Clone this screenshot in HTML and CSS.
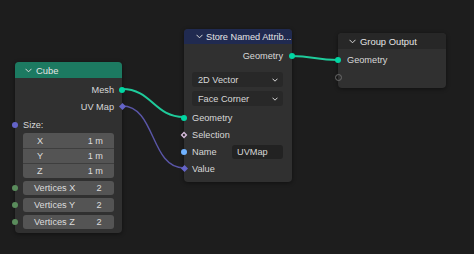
FILE: index.html
```html
<!DOCTYPE html>
<html lang="en">
<head>
    <meta charset="UTF-8">
    <title>Node Editor</title>
    <link rel="stylesheet" href="styles.css">
</head>
<body>
    <div class="editor">
        <svg class="links" width="474" height="254" viewBox="0 0 474 254">
            <path d="M122 89 C152 89 154 117 184 117" class="link link-geo"/>
            <path d="M122 106 C156 106 150 168 184 168" class="link link-vec"/>
            <path d="M291 56 C314 56 315 60 338 60" class="link link-geo"/>
        </svg>

        <!-- Cube -->
        <div class="node node-cube">
            <div class="node-header header-mesh">
                <svg class="chevron" width="7" height="5" viewBox="0 0 7 5"><polyline points="0.5,0.8 3.5,3.8 6.5,0.8"/></svg>
                <span>Cube</span>
            </div>
            <div class="node-body">
                <div class="row row-out"><span>Mesh</span><i class="socket socket-out geo"></i></div>
                <div class="row row-out"><span>UV Map</span><i class="socket socket-out diamond vec"></i></div>
                <div class="row row-in row-size"><i class="socket socket-in vec"></i><span>Size:</span></div>
                <div class="field-group">
                    <div class="field"><span class="field-label">X</span><span>1 m</span></div>
                    <div class="field"><span class="field-label">Y</span><span>1 m</span></div>
                    <div class="field"><span class="field-label">Z</span><span>1 m</span></div>
                </div>
                <div class="field field-single"><i class="socket socket-in int"></i><span>Vertices X</span><span class="num">2</span></div>
                <div class="field field-single"><i class="socket socket-in int"></i><span>Vertices Y</span><span class="num">2</span></div>
                <div class="field field-single"><i class="socket socket-in int"></i><span>Vertices Z</span><span class="num">2</span></div>
            </div>
        </div>

        <!-- Store Named Attribute -->
        <div class="node node-store">
            <div class="node-header header-attr">
                <svg class="chevron" width="7" height="5" viewBox="0 0 7 5"><polyline points="0.5,0.8 3.5,3.8 6.5,0.8"/></svg>
                <span>Store Named Attrib...</span>
            </div>
            <div class="node-body">
                <div class="row row-out"><span>Geometry</span><i class="socket socket-out geo"></i></div>
                <div class="dropdown dropdown-first"><span>2D Vector</span>
                    <svg class="chevron small" width="6" height="4" viewBox="0 0 6 4"><polyline points="0.5,0.7 3,3.2 5.5,0.7"/></svg>
                </div>
                <div class="dropdown"><span>Face Corner</span>
                    <svg class="chevron small" width="6" height="4" viewBox="0 0 6 4"><polyline points="0.5,0.7 3,3.2 5.5,0.7"/></svg>
                </div>
                <div class="row row-in row-first"><i class="socket socket-in geo"></i><span>Geometry</span></div>
                <div class="row row-in">
                    <svg class="socket-svg" width="8" height="8" viewBox="0 0 8 8"><path d="M4 0.6 L7.4 4 L4 7.4 L0.6 4 Z M4 2.6 L5.4 4 L4 5.4 L2.6 4 Z" fill="#d3b8d8" fill-rule="evenodd"/></svg>
                    <span>Selection</span>
                </div>
                <div class="row row-in"><i class="socket socket-in str"></i><span>Name</span><span class="text-field">UVMap</span></div>
                <div class="row row-in"><i class="socket socket-in diamond vec"></i><span>Value</span></div>
            </div>
        </div>

        <!-- Group Output -->
        <div class="node node-output">
            <div class="node-header header-group">
                <svg class="chevron" width="7" height="5" viewBox="0 0 7 5"><polyline points="0.5,0.8 3.5,3.8 6.5,0.8"/></svg>
                <span>Group Output</span>
            </div>
            <div class="node-body">
                <div class="row row-in"><i class="socket socket-in geo"></i><span>Geometry</span></div>
                <div class="row row-in"><i class="socket socket-in empty"></i></div>
            </div>
        </div>
    </div>
</body>
</html>
```

FILE: styles.css
```css
body {
    margin: 0;
    background: #1d1d1d;
    font-family: 'Liberation Sans', Arial, sans-serif;
    font-size: 9.2px;
    color: #d8d8d8;
}

.editor {
    position: relative;
    width: 474px;
    height: 254px;
    overflow: hidden;
    background: #1d1d1d;
}

.links {
    position: absolute;
    left: 0;
    top: 0;
}

.link {
    fill: none;
}

.link-geo {
    stroke: #1fcb9b;
    stroke-width: 2;
}

.link-vec {
    stroke: #5a56a8;
    stroke-width: 1.4;
}

/* nodes sit on a free canvas */
.node {
    position: absolute;
    background: #303030;
    border-radius: 4px;
    box-shadow: 0 1px 4px rgba(0, 0, 0, 0.45);
}

.node-cube {
    left: 15px;
    top: 62px;
    width: 107px;
}

.node-store {
    left: 184px;
    top: 29px;
    width: 108px;
}

.node-output {
    left: 338px;
    top: 33px;
    width: 108px;
}

.node-header {
    display: flex;
    align-items: center;
    height: 16px;
    padding-left: 10px;
    gap: 4px;
    border-radius: 4px 4px 0 0;
    color: #e4e4e4;
    font-size: 9.4px;
    white-space: nowrap;
    overflow: hidden;
}

.header-mesh {
    background: #1c7a61;
}

.header-attr {
    background: #202a50;
    height: 15px;
    padding-left: 12px;
    gap: 3px;
    font-size: 9.2px;
}

.header-group {
    background: #272727;
    padding-left: 11px;
}

.chevron polyline {
    fill: none;
    stroke: #d8d8d8;
    stroke-width: 1;
}

.node-body {
    display: flex;
    flex-direction: column;
    padding: 3px 0 4px;
}

.node-store .node-body {
    padding-bottom: 5px;
}

.node-output .node-body {
    padding: 2px 0 3px;
}

.row {
    position: relative;
    display: flex;
    align-items: center;
    height: 17px;
}

.row-out {
    justify-content: flex-end;
    padding-right: 8px;
}

.node-store .row-out {
    padding-right: 9px;
}

.row-in {
    padding-left: 8px;
}

.node-output .row-in {
    padding-left: 9px;
}

.row-size {
    margin-top: 2px;
    height: 16px;
}

.row-first {
    margin-top: 3px;
}

.socket {
    position: absolute;
    top: 50%;
    width: 6px;
    height: 6px;
    margin-top: -3px;
    border-radius: 50%;
}

.socket-out {
    right: -3px;
}

.socket-in {
    left: -3px;
}

.socket.diamond {
    width: 5px;
    height: 5px;
    margin-top: -2.5px;
    border-radius: 0;
    transform: rotate(45deg);
}

.socket-out.diamond {
    right: -2.5px;
}

.socket-in.diamond {
    left: -2.5px;
}

.socket-svg {
    position: absolute;
    left: -4px;
    top: 50%;
    margin-top: -4px;
}

.geo { background: #00d6a3; }
.vec { background: #6464c8; }
.int { background: #5a8c5c; }
.str { background: #70b2ff; }

.empty {
    width: 5px;
    height: 5px;
    border: 1px solid #6a6a6a;
    background: transparent;
}

/* value fields */
.field-group {
    display: flex;
    flex-direction: column;
    margin: 0 8px;
    border-radius: 3px;
    overflow: hidden;
}

.field {
    display: flex;
    align-items: center;
    justify-content: space-between;
    height: 15px;
    padding: 0 11px 0 14px;
    background: #545454;
    color: #dcdcdc;
}

.field-group .field + .field {
    border-top: 1px solid #3e3e3e;
    height: 14px;
}

.field-single {
    position: relative;
    height: 14px;
    margin: 3px 8px 0;
    padding: 0 11px 0 11px;
    border-radius: 3px;
}

.field-single .socket-in {
    left: -11px;
}

.num {
    width: 8px;
    text-align: center;
}

.dropdown {
    display: flex;
    align-items: center;
    justify-content: space-between;
    height: 15px;
    margin: 4px 9px 0 8px;
    padding: 0 5px 0 6px;
    background: #282828;
    border-radius: 3px;
    color: #d8d8d8;
}

.dropdown-first {
    margin-top: 8px;
}

.text-field {
    display: flex;
    align-items: center;
    height: 14px;
    margin-left: auto;
    margin-right: 9px;
    width: 46px;
    padding-left: 5px;
    background: #222222;
    border-radius: 3px;
}
```
